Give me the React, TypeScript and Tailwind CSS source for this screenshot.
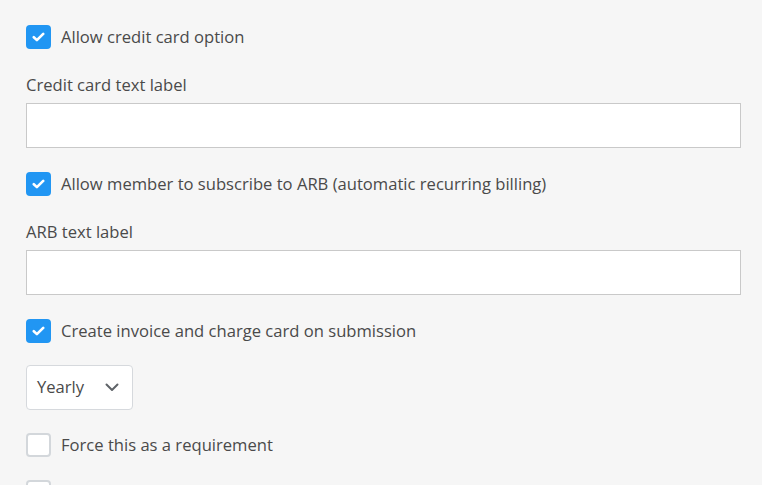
import { useState } from 'react'

const font = { fontFamily: '"Open Sans", "Noto Sans", sans-serif' }

function Check({ checked, label, onChange }: { checked: boolean; label: string; onChange: () => void }) {
  return (
    <label className="flex items-center gap-[10px] cursor-pointer select-none h-6">
      <span
        onClick={onChange}
        className={
          checked
            ? 'w-[25px] h-[24px] rounded-[4px] bg-[#2196f3] flex items-center justify-center shrink-0'
            : 'w-[25px] h-[24px] rounded-[4px] bg-white border-2 border-[#d3d7db] shrink-0'
        }
      >
        {checked && (
          <svg width="13" height="10" viewBox="0 0 13 10" fill="none">
            <path d="M1.8 5.2 4.9 8.1 11.2 1.9" stroke="white" strokeWidth="2.6" strokeLinecap="round" strokeLinejoin="round" />
          </svg>
        )}
      </span>
      <span className="text-[16.6px] leading-6 text-[#4a4a4a]">{label}</span>
    </label>
  )
}

function TextField({ label }: { label: string }) {
  return (
    <div className="flex flex-col gap-[6px]">
      <span className="text-[16.6px] leading-6 text-[#4a4a4a]">{label}</span>
      <input type="text" className="w-[715px] h-[45px] border border-[#c9c9c9] bg-white px-3 outline-none" />
    </div>
  )
}

export default function App() {
  const [opts, setOpts] = useState({ cc: true, arb: true, invoice: true, force: false, other: false })
  const toggle = (k: keyof typeof opts) => setOpts({ ...opts, [k]: !opts[k] })

  return (
    <div style={font} className="bg-[#f6f6f6] px-[26px] pt-[25px] overflow-hidden h-[485px]">
      <div className="flex flex-col gap-6">
        <Check checked={opts.cc} label="Allow credit card option" onChange={() => toggle('cc')} />
        <TextField label="Credit card text label" />
        <Check checked={opts.arb} label="Allow member to subscribe to ARB (automatic recurring billing)" onChange={() => toggle('arb')} />
        <TextField label="ARB text label" />
        <Check checked={opts.invoice} label="Create invoice and charge card on submission" onChange={() => toggle('invoice')} />
        <div className="w-[107px] h-[45px] border border-[#d6d9dd] rounded-[4px] bg-white flex items-center justify-between pl-[10px] pr-[13px] -mt-[2px]">
          <span className="text-[16.6px] text-[#4a4a4a]">Yearly</span>
          <svg width="14" height="9" viewBox="0 0 14 9" fill="none">
            <path d="M1.5 1.5 7 7 12.5 1.5" stroke="#5f6368" strokeWidth="2" strokeLinecap="round" strokeLinejoin="round" />
          </svg>
        </div>
        <div className="-mt-[1px] flex flex-col gap-[23px]">
          <Check checked={opts.force} label="Force this as a requirement" onChange={() => toggle('force')} />
          <Check checked={opts.other} label="" onChange={() => toggle('other')} />
        </div>
      </div>
    </div>
  )
}
